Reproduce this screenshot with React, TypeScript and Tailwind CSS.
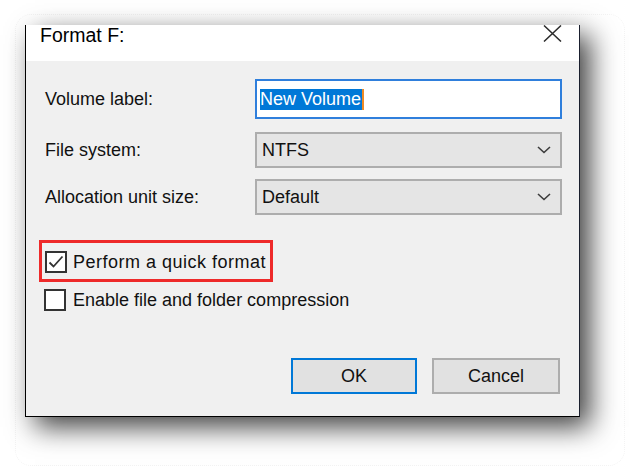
import React from "react";

function Chevron() {
  return (
    <svg width="14" height="8" viewBox="0 0 14 8" fill="none">
      <path d="M1 1 L7 6.5 L13 1" stroke="#3c3c3c" strokeWidth="1.6" />
    </svg>
  );
}

function Checkbox({ checked }: { checked?: boolean }) {
  return (
    <div className="w-[22px] h-[22px] border-2 border-[#333333] bg-white flex items-center justify-center shrink-0">
      {checked && (
        <svg width="16" height="14" viewBox="0 0 16 14" fill="none">
          <path d="M1.5 7.5 L5.5 11.5 L14.5 1.5" stroke="#333333" strokeWidth="1.8" />
        </svg>
      )}
    </div>
  );
}

export default function App() {
  return (
    <div
      className="min-h-[475px] w-[638px] bg-white text-[18px] text-[#111111]"
      style={{ fontFamily: '"Liberation Sans", Arial, sans-serif' }}
    >
      <div className="pt-[14px] pl-[15px]">
        <div className="w-[610px] h-[452px] rounded-[16px] border border-dotted border-[#f3f3f3] pt-[10px] pl-[9px]">
          <div className="w-[555px] h-[392px] border-l border-r border-b border-l-black border-r-[#1a1f2e] border-b-black flex flex-col shadow-[10px_10px_26px_rgba(0,0,0,0.75)]">
            {/* Title bar */}
            <div className="h-[36px] bg-white flex items-start justify-between pl-[14px] pr-[17px] shrink-0">
              <span className="text-[19.5px] text-black leading-none pt-[1px]">Format F:</span>
              <svg width="19" height="17" viewBox="0 0 19 17" fill="none">
                <path d="M1 0.5 L18 16.5 M18 0.5 L1 16.5" stroke="#2b2b2b" strokeWidth="1.5" />
              </svg>
            </div>
            {/* Body */}
            <div className="flex-1 bg-[#f0f0f0] flex flex-col">
              <div className="pl-[19px] pr-[17px]">
                <div className="mt-[18px] h-[40px] flex items-center">
                  <span className="w-[210px] shrink-0">Volume label:</span>
                  <div className="flex-1 h-[40px] border-2 border-[#2f7fdc] bg-white flex items-center pl-[3px]">
                    <span className="bg-[#0078d7] text-white h-[21px] leading-[21px] pr-[1px]">New Volume</span>
                    <span className="w-[2px] h-[21px] bg-[#f08a24]"></span>
                  </div>
                </div>
                <div className="mt-[13px] h-[36px] flex items-center">
                  <span className="w-[210px] shrink-0">File system:</span>
                  <div className="flex-1 h-[36px] border-2 border-[#adadad] bg-[#e5e5e5] flex items-center justify-between pl-[5px] pr-[9px]">
                    <span>NTFS</span>
                    <Chevron />
                  </div>
                </div>
                <div className="mt-[11px] h-[36px] flex items-center">
                  <span className="w-[210px] shrink-0">Allocation unit size:</span>
                  <div className="flex-1 h-[36px] border-2 border-[#adadad] bg-[#e5e5e5] flex items-center justify-between pl-[5px] pr-[9px]">
                    <span>Default</span>
                    <Chevron />
                  </div>
                </div>
              </div>
              <div className="pl-[13px]">
                <div className="mt-[25px] w-[234px] h-[42px] border-[3px] border-[#ee2a2a] flex items-center pl-[3px] pt-[2px]">
                  <Checkbox checked />
                  <span className="ml-[6px] whitespace-nowrap tracking-[0.5px]">Perform a quick format</span>
                </div>
                <div className="mt-[6px] h-[24px] flex items-center pl-[5px]">
                  <Checkbox />
                  <span className="ml-[7px] whitespace-nowrap">Enable file and folder compression</span>
                </div>
              </div>
              <div className="mt-auto pb-[22px] pr-[19px] flex justify-end gap-[15px]">
                <button className="w-[126px] h-[36px] border-2 border-[#0078d7] bg-[#e1e1e1] flex items-center justify-center">
                  OK
                </button>
                <button className="w-[128px] h-[36px] border-2 border-[#adadad] bg-[#e1e1e1] flex items-center justify-center">
                  Cancel
                </button>
              </div>
            </div>
          </div>
        </div>
      </div>
    </div>
  );
}
